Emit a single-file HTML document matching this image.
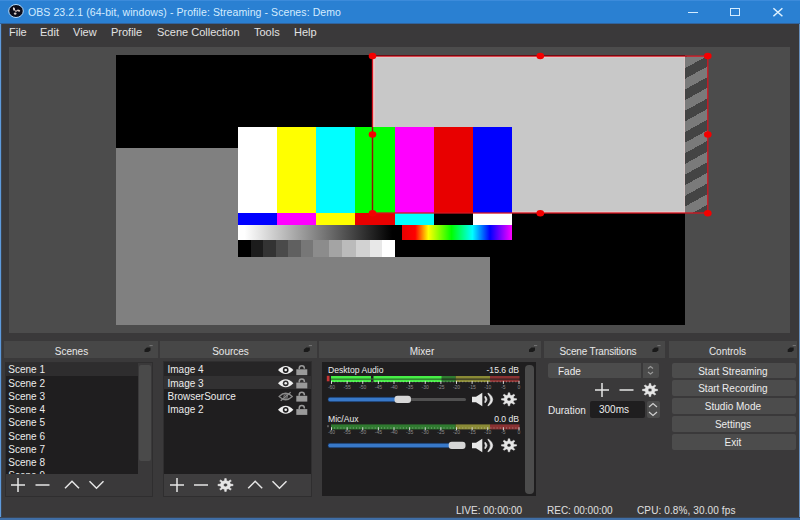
<!DOCTYPE html>
<html>
<head>
<meta charset="utf-8">
<title>OBS</title>
<style>
*{margin:0;padding:0;box-sizing:border-box;}
html,body{width:800px;height:520px;overflow:hidden;background:#3a393a;}
body{font-family:"Liberation Sans",sans-serif;color:#e6e6e6;position:relative;}
.a{position:absolute;}
.t{position:absolute;white-space:nowrap;line-height:1;}
#titlebar{left:0;top:0;width:800px;height:23px;background:#2a80d2;}
#title{left:28px;top:6.5px;font-size:10.5px;color:#d4ecff;letter-spacing:0.085px;}
.menu{top:27px;font-size:11px;color:#e2e2e2;}
#preview{left:9px;top:46.6px;width:781px;height:286px;background:#4c4c4c;}
.docktitle{background:#474747;height:17px;top:341.4px;}
.dt{font-size:10px;color:#e8e8e8;top:347px;text-align:center;}
.list{background:#1f1e1f;}
.row{font-size:10px;color:#ececec;}
.mrow{font-size:8.6px;color:#ececec;}
.btn{left:672.3px;width:123.3px;height:15.7px;background:#4c4c4c;border-radius:2px;font-size:10px;color:#ececec;text-align:center;line-height:16.4px;padding-right:2px;}
.st{font-size:10px;color:#e0e0e0;top:506.4px;}
</style>
</head>
<body>
<!-- title bar -->
<div class="a" id="titlebar" style=""></div>
<div class="a" style="left:0;top:0;width:800px;height:1px;background:#3c8bdb"></div>
<svg class="a" style="left:7.5px;top:3.3px" width="16" height="16" viewBox="0 0 16 16">
  <ellipse cx="8" cy="8" rx="7.3" ry="6.5" fill="#0c0c18" stroke="#b4dcff" stroke-width="1"/>
  <ellipse cx="6" cy="6" rx="1" ry="1.8" fill="#e8dcd8" transform="rotate(-15 6 6)"/>
  <ellipse cx="10.6" cy="7.6" rx="1.7" ry="1" fill="#d8c8c4" transform="rotate(15 10.6 7.6)"/>
  <ellipse cx="7.2" cy="10.6" rx="1.3" ry="1.2" fill="#d8ccc8"/>
  <ellipse cx="8" cy="8" rx="1" ry="0.9" fill="#b8a8a4"/>
</svg>
<div class="t" id="title">OBS 23.2.1 (64-bit, windows) - Profile: Streaming - Scenes: Demo</div>
<div class="a" style="left:688px;top:11.5px;width:10px;height:1.2px;background:#d4ecff"></div>
<div class="a" style="left:730.4px;top:7.6px;width:9.8px;height:8.6px;border:1.1px solid #d4ecff"></div>
<svg class="a" style="left:772px;top:6px" width="12" height="12" viewBox="0 0 12 12"><path d="M1.4 2.2 L10.4 10.2 M10.4 2.2 L1.4 10.2" stroke="#e0f2ff" stroke-width="1.5" fill="none"/></svg>
<!-- menu -->
<div class="t menu" style="left:9px;top:27px;">File</div>
<div class="t menu" style="left:40px;top:27px;">Edit</div>
<div class="t menu" style="left:73px;top:27px;">View</div>
<div class="t menu" style="left:111px;top:27px;">Profile</div>
<div class="t menu" style="left:157px;top:27px;">Scene Collection</div>
<div class="t menu" style="left:254px;top:27px;">Tools</div>
<div class="t menu" style="left:294px;top:27px;">Help</div>
<!-- preview -->
<div class="a" id="preview" style=""></div>
<div class="a" style="left:116px;top:55px;width:569px;height:270px;background:#000"></div>
<div class="a" style="left:116px;top:148px;width:374px;height:177px;background:#808080"></div>
<div class="a" style="left:373px;top:56px;width:312px;height:157px;background:#c8c8c8;box-shadow:inset 1px 1px 0 0.6px #f0cccc, inset 0 -1px 0 0.4px #f0cccc"></div>
<div class="a" style="left:685px;top:56px;width:23px;height:157px;background:repeating-linear-gradient(151deg,#444 -7.9px,#444 1.4px,#7a7a7a 1.4px,#7a7a7a 10.7px)"></div>
<div class="a" style="left:238px;top:127px;width:274px;height:130px;background:#000"></div>
<div class="a" style="left:238px;top:127px;width:274px;height:86px;background:linear-gradient(90deg,#fff 0 14.2857%,#ff0 14.2857% 28.5714%,#0ff 28.5714% 42.857%,#0f0 42.857% 57.143%,#f0f 57.143% 71.43%,#e80000 71.43% 85.714%,#00f 85.714% 100%)"></div>
<div class="a" style="left:238px;top:213px;width:274px;height:12px;background:linear-gradient(90deg,#00f 0 14.2857%,#f0f 14.2857% 28.5714%,#ff0 28.5714% 42.857%,#e80000 42.857% 57.143%,#0ff 57.143% 71.43%,#000 71.43% 85.714%,#fff 85.714% 100%)"></div>
<div class="a" style="left:238px;top:225px;width:164px;height:15px;background:linear-gradient(90deg,#fff 0%,#fff 4%,#000 94%,#000 100%)"></div>
<div class="a" style="left:402px;top:225px;width:110px;height:15px;background:linear-gradient(90deg,#e80000 0%,#f00 12%,#ff0 24%,#0f0 45%,#0ff 64%,#00f 80%,#f0f 100%)"></div>
<div class="a" style="left:238px;top:240px;width:157px;height:17px;background:linear-gradient(90deg,#000 0 8%,#1c1c1c 8% 16%,#333 16% 24%,#4a4a4a 24% 32%,#606060 32% 40%,#777 40% 48%,#8c8c8c 48% 58%,#a4a4a4 58% 66%,#bbb 66% 75%,#d2d2d2 75% 84%,#e8e8e8 84% 92%,#fff 92% 100%)"></div>
<svg class="a" style="left:0;top:0" width="800" height="340">
 <rect x="372.5" y="56.1" width="335.3" height="156.9" fill="none" stroke="#d41420" stroke-width="1.3"/>
 <path d="M372.5 127V213" stroke="#8c1800" stroke-width="1.25" fill="none"/>
 <path d="M372.5 213V214" stroke="#f00" stroke-width="1.25" fill="none"/>
 <g fill="#f40000">
  <ellipse cx="372.5" cy="56" rx="3.8" ry="3.2"/><ellipse cx="540.3" cy="56" rx="3.8" ry="3.2"/><ellipse cx="707.8" cy="56" rx="3.8" ry="3.2"/>
  <ellipse cx="372.5" cy="134.5" rx="3.8" ry="3.2"/><ellipse cx="707.8" cy="134.5" rx="3.8" ry="3.2"/>
  <ellipse cx="372.5" cy="213.2" rx="3.8" ry="3.2"/><ellipse cx="540.3" cy="213.2" rx="3.8" ry="3.2"/><ellipse cx="707.8" cy="213.2" rx="3.8" ry="3.2"/>
 </g>
</svg>
<!-- dock titles -->
<div class="a docktitle" style="left:4px;width:153.5px"></div>
<div class="a docktitle" style="left:160px;width:156.7px"></div>
<div class="a docktitle" style="left:318.6px;width:222.6px"></div>
<div class="a docktitle" style="left:544px;width:121.3px"></div>
<div class="a docktitle" style="left:668.5px;width:128.5px"></div>
<div class="t dt" style="left:4px;top:347px;width:135px;">Scenes</div>
<div class="t dt" style="left:160px;top:347px;width:141px;">Sources</div>
<div class="t dt" style="left:319px;top:347px;width:206px;">Mixer</div>
<div class="t dt" style="left:543px;top:347px;width:110px;letter-spacing:-0.15px;">Scene Transitions</div>
<div class="t dt" style="left:667px;top:347px;width:121px;">Controls</div>
<!-- scenes -->
<div class="a list" style="left:6px;top:362.5px;width:144px;height:111.5px"></div>
<div class="a" style="left:6px;top:362.5px;width:132px;height:13px;background:#2e2d2e"></div>
<div class="a" style="left:138px;top:362.5px;width:13px;height:111.5px;background:#3a393a"></div>
<div class="a" style="left:139px;top:364.6px;width:11.5px;height:96px;background:#4a4a4a;border-radius:2px"></div>
<div class="a" style="left:5px;top:361.5px;width:147.5px;height:135.3px;border:1px solid #2f2e2f"></div>
<div class="a" style="left:0;top:0;width:138px;height:474px;overflow:hidden">
<div class="t row" style="left:8.3px;top:365.2px;">Scene 1</div>
<div class="t row" style="left:8.3px;top:378.5px;">Scene 2</div>
<div class="t row" style="left:8.3px;top:391.7px;">Scene 3</div>
<div class="t row" style="left:8.3px;top:405.0px;">Scene 4</div>
<div class="t row" style="left:8.3px;top:418.3px;">Scene 5</div>
<div class="t row" style="left:8.3px;top:431.5px;">Scene 6</div>
<div class="t row" style="left:8.3px;top:444.8px;">Scene 7</div>
<div class="t row" style="left:8.3px;top:458.1px;">Scene 8</div>
<div class="t row" style="left:8.3px;top:471.4px;">Scene 9</div>
</div>
<!-- sources -->
<div class="a list" style="left:164px;top:362px;width:147px;height:112px"></div>
<div class="a" style="left:164px;top:362px;width:147px;height:13.7px;background:#262526"></div>
<div class="a" style="left:164px;top:375.7px;width:147px;height:13.6px;background:#323132"></div>
<div class="a" style="left:164px;top:474px;width:147px;height:22px;background:#3e3d3e"></div>
<div class="a" style="left:163px;top:361.3px;width:149px;height:135.5px;border:1px solid #2f2e2f"></div>
<div class="t row" style="left:167.5px;top:365.3px;">Image 4</div>
<div class="t row" style="left:167.5px;top:378.6px;">Image 3</div>
<div class="t row" style="left:167.5px;top:391.8px;">BrowserSource</div>
<div class="t row" style="left:167.5px;top:405.1px;">Image 2</div>
<!-- mixer -->
<div class="a list" style="left:322px;top:362px;width:214px;height:134px"></div>
<div class="a" style="left:525.3px;top:364.7px;width:8.7px;height:129px;background:#4c4c4c;border-radius:4px"></div>
<div class="t mrow" style="left:328px;top:366px;">Desktop Audio</div>
<div class="t mrow" style="left:440px;top:366px;width:79px;text-align:right;">-15.6 dB</div>
<div class="t mrow" style="left:328px;top:414.5px;">Mic/Aux</div>
<div class="t mrow" style="left:440px;top:414.5px;width:79px;text-align:right;">0.0 dB</div>
<!-- transitions -->
<div class="a" style="left:548px;top:362.7px;width:93.4px;height:15.5px;background:#4c4c4c;border-radius:2px 0 0 2px"></div>
<div class="a" style="left:642.6px;top:362.7px;width:16.6px;height:15.5px;background:#4c4c4c;border-radius:0 2px 2px 0"></div>
<div class="t row" style="left:558px;top:367.2px;">Fade</div>
<div class="t row" style="left:548px;top:406px;">Duration</div>
<div class="a" style="left:590px;top:401px;width:55px;height:17px;background:#1f1e1f;border-radius:2px"></div>
<div class="t row" style="left:599px;top:405px;">300ms</div>
<div class="a" style="left:647px;top:401px;width:13px;height:17px;background:#4c4c4c;border-radius:2px"></div>
<svg class="a" style="left:0;top:340px" width="800" height="180" viewBox="0 340 800 180">
<rect x="331" y="376" width="124.69999999999999" height="2.6" fill="#2f7a2f" /><rect x="455.7" y="376" width="34.30000000000001" height="2.6" fill="#8a8a35" /><rect x="490" y="376" width="29.5" height="2.6" fill="#8a3232" /><rect x="331" y="376" width="110.5" height="2.6" fill="#46ee46" /><rect x="371" y="376" width="2.5" height="2.6" fill="#1f1e1f" /><rect x="331" y="379.6" width="124.69999999999999" height="2.4" fill="#2f7a2f" /><rect x="455.7" y="379.6" width="34.30000000000001" height="2.4" fill="#8a8a35" /><rect x="490" y="379.6" width="29.5" height="2.4" fill="#8a3232" /><rect x="331" y="379.6" width="110.5" height="2.4" fill="#46ee46" /><rect x="371" y="379.6" width="2.5" height="2.4" fill="#1f1e1f" />
<rect x="326.8" y="375.8" width="2.7" height="5.5" fill="#c43434" />
<rect x="331.0" y="380.9" width="1" height="3" fill="#d8d8d8" /><rect x="334.12" y="380.9" width="1" height="1.6" fill="#d2d2d2" opacity="0.35"/><rect x="337.25" y="380.9" width="1" height="1.6" fill="#d2d2d2" opacity="0.35"/><rect x="340.38" y="380.9" width="1" height="1.6" fill="#d2d2d2" opacity="0.35"/><rect x="343.5" y="380.9" width="1" height="1.6" fill="#d2d2d2" opacity="0.35"/><rect x="346.62" y="380.9" width="1" height="3" fill="#d8d8d8" /><rect x="349.75" y="380.9" width="1" height="1.6" fill="#d2d2d2" opacity="0.35"/><rect x="352.88" y="380.9" width="1" height="1.6" fill="#d2d2d2" opacity="0.35"/><rect x="356.0" y="380.9" width="1" height="1.6" fill="#d2d2d2" opacity="0.35"/><rect x="359.12" y="380.9" width="1" height="1.6" fill="#d2d2d2" opacity="0.35"/><rect x="362.25" y="380.9" width="1" height="3" fill="#d8d8d8" /><rect x="365.38" y="380.9" width="1" height="1.6" fill="#d2d2d2" opacity="0.35"/><rect x="368.5" y="380.9" width="1" height="1.6" fill="#d2d2d2" opacity="0.35"/><rect x="371.62" y="380.9" width="1" height="1.6" fill="#d2d2d2" opacity="0.35"/><rect x="374.75" y="380.9" width="1" height="1.6" fill="#d2d2d2" opacity="0.35"/><rect x="377.88" y="380.9" width="1" height="3" fill="#d8d8d8" /><rect x="381.0" y="380.9" width="1" height="1.6" fill="#d2d2d2" opacity="0.35"/><rect x="384.12" y="380.9" width="1" height="1.6" fill="#d2d2d2" opacity="0.35"/><rect x="387.25" y="380.9" width="1" height="1.6" fill="#d2d2d2" opacity="0.35"/><rect x="390.38" y="380.9" width="1" height="1.6" fill="#d2d2d2" opacity="0.35"/><rect x="393.5" y="380.9" width="1" height="3" fill="#d8d8d8" /><rect x="396.62" y="380.9" width="1" height="1.6" fill="#d2d2d2" opacity="0.35"/><rect x="399.75" y="380.9" width="1" height="1.6" fill="#d2d2d2" opacity="0.35"/><rect x="402.88" y="380.9" width="1" height="1.6" fill="#d2d2d2" opacity="0.35"/><rect x="406.0" y="380.9" width="1" height="1.6" fill="#d2d2d2" opacity="0.35"/><rect x="409.12" y="380.9" width="1" height="3" fill="#d8d8d8" /><rect x="412.25" y="380.9" width="1" height="1.6" fill="#d2d2d2" opacity="0.35"/><rect x="415.38" y="380.9" width="1" height="1.6" fill="#d2d2d2" opacity="0.35"/><rect x="418.5" y="380.9" width="1" height="1.6" fill="#d2d2d2" opacity="0.35"/><rect x="421.62" y="380.9" width="1" height="1.6" fill="#d2d2d2" opacity="0.35"/><rect x="424.75" y="380.9" width="1" height="3" fill="#d8d8d8" /><rect x="427.88" y="380.9" width="1" height="1.6" fill="#d2d2d2" opacity="0.35"/><rect x="431.0" y="380.9" width="1" height="1.6" fill="#d2d2d2" opacity="0.35"/><rect x="434.12" y="380.9" width="1" height="1.6" fill="#d2d2d2" opacity="0.35"/><rect x="437.25" y="380.9" width="1" height="1.6" fill="#d2d2d2" opacity="0.35"/><rect x="440.38" y="380.9" width="1" height="3" fill="#d8d8d8" /><rect x="443.5" y="380.9" width="1" height="1.6" fill="#d2d2d2" opacity="0.35"/><rect x="446.62" y="380.9" width="1" height="1.6" fill="#d2d2d2" opacity="0.35"/><rect x="449.75" y="380.9" width="1" height="1.6" fill="#d2d2d2" opacity="0.35"/><rect x="452.88" y="380.9" width="1" height="1.6" fill="#d2d2d2" opacity="0.35"/><rect x="456.0" y="380.9" width="1" height="3" fill="#d8d8d8" /><rect x="459.12" y="380.9" width="1" height="1.6" fill="#d2d2d2" opacity="0.35"/><rect x="462.25" y="380.9" width="1" height="1.6" fill="#d2d2d2" opacity="0.35"/><rect x="465.38" y="380.9" width="1" height="1.6" fill="#d2d2d2" opacity="0.35"/><rect x="468.5" y="380.9" width="1" height="1.6" fill="#d2d2d2" opacity="0.35"/><rect x="471.62" y="380.9" width="1" height="3" fill="#d8d8d8" /><rect x="474.75" y="380.9" width="1" height="1.6" fill="#d2d2d2" opacity="0.35"/><rect x="477.88" y="380.9" width="1" height="1.6" fill="#d2d2d2" opacity="0.35"/><rect x="481.0" y="380.9" width="1" height="1.6" fill="#d2d2d2" opacity="0.35"/><rect x="484.12" y="380.9" width="1" height="1.6" fill="#d2d2d2" opacity="0.35"/><rect x="487.25" y="380.9" width="1" height="3" fill="#d8d8d8" /><rect x="490.38" y="380.9" width="1" height="1.6" fill="#d2d2d2" opacity="0.35"/><rect x="493.5" y="380.9" width="1" height="1.6" fill="#d2d2d2" opacity="0.35"/><rect x="496.62" y="380.9" width="1" height="1.6" fill="#d2d2d2" opacity="0.35"/><rect x="499.75" y="380.9" width="1" height="1.6" fill="#d2d2d2" opacity="0.35"/><rect x="502.88" y="380.9" width="1" height="3" fill="#d8d8d8" /><rect x="506.0" y="380.9" width="1" height="1.6" fill="#d2d2d2" opacity="0.35"/><rect x="509.12" y="380.9" width="1" height="1.6" fill="#d2d2d2" opacity="0.35"/><rect x="512.25" y="380.9" width="1" height="1.6" fill="#d2d2d2" opacity="0.35"/><rect x="515.38" y="380.9" width="1" height="1.6" fill="#d2d2d2" opacity="0.35"/><rect x="518.5" y="380.9" width="1" height="3" fill="#d8d8d8" /><text x="331.5" y="388.5" text-anchor="middle" font-size="5" fill="#8c8c8c" font-family="Liberation Sans, sans-serif">-60</text><text x="347.1" y="388.5" text-anchor="middle" font-size="5" fill="#8c8c8c" font-family="Liberation Sans, sans-serif">-55</text><text x="362.8" y="388.5" text-anchor="middle" font-size="5" fill="#8c8c8c" font-family="Liberation Sans, sans-serif">-50</text><text x="378.4" y="388.5" text-anchor="middle" font-size="5" fill="#8c8c8c" font-family="Liberation Sans, sans-serif">-45</text><text x="394.0" y="388.5" text-anchor="middle" font-size="5" fill="#8c8c8c" font-family="Liberation Sans, sans-serif">-40</text><text x="409.6" y="388.5" text-anchor="middle" font-size="5" fill="#8c8c8c" font-family="Liberation Sans, sans-serif">-35</text><text x="425.2" y="388.5" text-anchor="middle" font-size="5" fill="#8c8c8c" font-family="Liberation Sans, sans-serif">-30</text><text x="440.9" y="388.5" text-anchor="middle" font-size="5" fill="#8c8c8c" font-family="Liberation Sans, sans-serif">-25</text><text x="456.5" y="388.5" text-anchor="middle" font-size="5" fill="#8c8c8c" font-family="Liberation Sans, sans-serif">-20</text><text x="472.1" y="388.5" text-anchor="middle" font-size="5" fill="#8c8c8c" font-family="Liberation Sans, sans-serif">-15</text><text x="487.8" y="388.5" text-anchor="middle" font-size="5" fill="#8c8c8c" font-family="Liberation Sans, sans-serif">-10</text><text x="503.4" y="388.5" text-anchor="middle" font-size="5" fill="#8c8c8c" font-family="Liberation Sans, sans-serif">-5</text><text x="519.0" y="388.5" text-anchor="middle" font-size="5" fill="#8c8c8c" font-family="Liberation Sans, sans-serif">0</text>
<rect x="331" y="424.4" width="124.69999999999999" height="5" fill="#2f7a2f" /><rect x="455.7" y="424.4" width="34.30000000000001" height="5" fill="#8a8a35" /><rect x="490" y="424.4" width="29.5" height="5" fill="#8a3232" />
<rect x="331.0" y="427.2" width="1" height="3" fill="#d8d8d8" /><rect x="334.12" y="427.2" width="1" height="1.6" fill="#d2d2d2" opacity="0.35"/><rect x="337.25" y="427.2" width="1" height="1.6" fill="#d2d2d2" opacity="0.35"/><rect x="340.38" y="427.2" width="1" height="1.6" fill="#d2d2d2" opacity="0.35"/><rect x="343.5" y="427.2" width="1" height="1.6" fill="#d2d2d2" opacity="0.35"/><rect x="346.62" y="427.2" width="1" height="3" fill="#d8d8d8" /><rect x="349.75" y="427.2" width="1" height="1.6" fill="#d2d2d2" opacity="0.35"/><rect x="352.88" y="427.2" width="1" height="1.6" fill="#d2d2d2" opacity="0.35"/><rect x="356.0" y="427.2" width="1" height="1.6" fill="#d2d2d2" opacity="0.35"/><rect x="359.12" y="427.2" width="1" height="1.6" fill="#d2d2d2" opacity="0.35"/><rect x="362.25" y="427.2" width="1" height="3" fill="#d8d8d8" /><rect x="365.38" y="427.2" width="1" height="1.6" fill="#d2d2d2" opacity="0.35"/><rect x="368.5" y="427.2" width="1" height="1.6" fill="#d2d2d2" opacity="0.35"/><rect x="371.62" y="427.2" width="1" height="1.6" fill="#d2d2d2" opacity="0.35"/><rect x="374.75" y="427.2" width="1" height="1.6" fill="#d2d2d2" opacity="0.35"/><rect x="377.88" y="427.2" width="1" height="3" fill="#d8d8d8" /><rect x="381.0" y="427.2" width="1" height="1.6" fill="#d2d2d2" opacity="0.35"/><rect x="384.12" y="427.2" width="1" height="1.6" fill="#d2d2d2" opacity="0.35"/><rect x="387.25" y="427.2" width="1" height="1.6" fill="#d2d2d2" opacity="0.35"/><rect x="390.38" y="427.2" width="1" height="1.6" fill="#d2d2d2" opacity="0.35"/><rect x="393.5" y="427.2" width="1" height="3" fill="#d8d8d8" /><rect x="396.62" y="427.2" width="1" height="1.6" fill="#d2d2d2" opacity="0.35"/><rect x="399.75" y="427.2" width="1" height="1.6" fill="#d2d2d2" opacity="0.35"/><rect x="402.88" y="427.2" width="1" height="1.6" fill="#d2d2d2" opacity="0.35"/><rect x="406.0" y="427.2" width="1" height="1.6" fill="#d2d2d2" opacity="0.35"/><rect x="409.12" y="427.2" width="1" height="3" fill="#d8d8d8" /><rect x="412.25" y="427.2" width="1" height="1.6" fill="#d2d2d2" opacity="0.35"/><rect x="415.38" y="427.2" width="1" height="1.6" fill="#d2d2d2" opacity="0.35"/><rect x="418.5" y="427.2" width="1" height="1.6" fill="#d2d2d2" opacity="0.35"/><rect x="421.62" y="427.2" width="1" height="1.6" fill="#d2d2d2" opacity="0.35"/><rect x="424.75" y="427.2" width="1" height="3" fill="#d8d8d8" /><rect x="427.88" y="427.2" width="1" height="1.6" fill="#d2d2d2" opacity="0.35"/><rect x="431.0" y="427.2" width="1" height="1.6" fill="#d2d2d2" opacity="0.35"/><rect x="434.12" y="427.2" width="1" height="1.6" fill="#d2d2d2" opacity="0.35"/><rect x="437.25" y="427.2" width="1" height="1.6" fill="#d2d2d2" opacity="0.35"/><rect x="440.38" y="427.2" width="1" height="3" fill="#d8d8d8" /><rect x="443.5" y="427.2" width="1" height="1.6" fill="#d2d2d2" opacity="0.35"/><rect x="446.62" y="427.2" width="1" height="1.6" fill="#d2d2d2" opacity="0.35"/><rect x="449.75" y="427.2" width="1" height="1.6" fill="#d2d2d2" opacity="0.35"/><rect x="452.88" y="427.2" width="1" height="1.6" fill="#d2d2d2" opacity="0.35"/><rect x="456.0" y="427.2" width="1" height="3" fill="#d8d8d8" /><rect x="459.12" y="427.2" width="1" height="1.6" fill="#d2d2d2" opacity="0.35"/><rect x="462.25" y="427.2" width="1" height="1.6" fill="#d2d2d2" opacity="0.35"/><rect x="465.38" y="427.2" width="1" height="1.6" fill="#d2d2d2" opacity="0.35"/><rect x="468.5" y="427.2" width="1" height="1.6" fill="#d2d2d2" opacity="0.35"/><rect x="471.62" y="427.2" width="1" height="3" fill="#d8d8d8" /><rect x="474.75" y="427.2" width="1" height="1.6" fill="#d2d2d2" opacity="0.35"/><rect x="477.88" y="427.2" width="1" height="1.6" fill="#d2d2d2" opacity="0.35"/><rect x="481.0" y="427.2" width="1" height="1.6" fill="#d2d2d2" opacity="0.35"/><rect x="484.12" y="427.2" width="1" height="1.6" fill="#d2d2d2" opacity="0.35"/><rect x="487.25" y="427.2" width="1" height="3" fill="#d8d8d8" /><rect x="490.38" y="427.2" width="1" height="1.6" fill="#d2d2d2" opacity="0.35"/><rect x="493.5" y="427.2" width="1" height="1.6" fill="#d2d2d2" opacity="0.35"/><rect x="496.62" y="427.2" width="1" height="1.6" fill="#d2d2d2" opacity="0.35"/><rect x="499.75" y="427.2" width="1" height="1.6" fill="#d2d2d2" opacity="0.35"/><rect x="502.88" y="427.2" width="1" height="3" fill="#d8d8d8" /><rect x="506.0" y="427.2" width="1" height="1.6" fill="#d2d2d2" opacity="0.35"/><rect x="509.12" y="427.2" width="1" height="1.6" fill="#d2d2d2" opacity="0.35"/><rect x="512.25" y="427.2" width="1" height="1.6" fill="#d2d2d2" opacity="0.35"/><rect x="515.38" y="427.2" width="1" height="1.6" fill="#d2d2d2" opacity="0.35"/><rect x="518.5" y="427.2" width="1" height="3" fill="#d8d8d8" /><text x="331.5" y="434.4" text-anchor="middle" font-size="5" fill="#8c8c8c" font-family="Liberation Sans, sans-serif">-60</text><text x="347.1" y="434.4" text-anchor="middle" font-size="5" fill="#8c8c8c" font-family="Liberation Sans, sans-serif">-55</text><text x="362.8" y="434.4" text-anchor="middle" font-size="5" fill="#8c8c8c" font-family="Liberation Sans, sans-serif">-50</text><text x="378.4" y="434.4" text-anchor="middle" font-size="5" fill="#8c8c8c" font-family="Liberation Sans, sans-serif">-45</text><text x="394.0" y="434.4" text-anchor="middle" font-size="5" fill="#8c8c8c" font-family="Liberation Sans, sans-serif">-40</text><text x="409.6" y="434.4" text-anchor="middle" font-size="5" fill="#8c8c8c" font-family="Liberation Sans, sans-serif">-35</text><text x="425.2" y="434.4" text-anchor="middle" font-size="5" fill="#8c8c8c" font-family="Liberation Sans, sans-serif">-30</text><text x="440.9" y="434.4" text-anchor="middle" font-size="5" fill="#8c8c8c" font-family="Liberation Sans, sans-serif">-25</text><text x="456.5" y="434.4" text-anchor="middle" font-size="5" fill="#8c8c8c" font-family="Liberation Sans, sans-serif">-20</text><text x="472.1" y="434.4" text-anchor="middle" font-size="5" fill="#8c8c8c" font-family="Liberation Sans, sans-serif">-15</text><text x="487.8" y="434.4" text-anchor="middle" font-size="5" fill="#8c8c8c" font-family="Liberation Sans, sans-serif">-10</text><text x="503.4" y="434.4" text-anchor="middle" font-size="5" fill="#8c8c8c" font-family="Liberation Sans, sans-serif">-5</text><text x="519.0" y="434.4" text-anchor="middle" font-size="5" fill="#8c8c8c" font-family="Liberation Sans, sans-serif">0</text>
<rect x="327" y="425.2" width="2" height="2" fill="#5a5a5a" />
<rect x="328" y="398" width="138" height="3" fill="#505050" rx="1.5"/><rect x="328" y="397.3" width="70" height="4.4" fill="#3878c8" rx="2" stroke="#14305c" stroke-width="0.6"/><rect x="394.5" y="395.7" width="16.5" height="7.3" fill="#d6d6d6" rx="3"/>
<rect x="328" y="443.3" width="125" height="4.4" fill="#3878c8" rx="2" stroke="#14305c" stroke-width="0.6"/><rect x="448.7" y="441.7" width="16.8" height="7.3" fill="#d6d6d6" rx="3"/>
<g fill="none" stroke="#e6e6e6" stroke-width="1.5">
<path d="M11 485H25M18 478V492"/><path d="M35.5 485H49.5"/><path d="M65 488.2L72 481.2L79 488.2"/><path d="M89.5 481.2L96.5 488.2L103.5 481.2"/>
<path d="M170 485H184M177 478V492"/><path d="M194 485H208"/><path d="M248.2 488.2L255.2 481.2L262.2 488.2"/><path d="M272.5 481.2L279.5 488.2L286.5 481.2"/>
<path d="M595 390H609M602 383V397"/><path d="M619.5 390H633.5"/>
</g>
<path d="M226.57 489.29 L226.27 491.50 L224.73 491.50 L224.43 489.29 L222.73 488.68 L220.70 490.07 L219.61 489.13 L221.22 487.38 L220.51 485.92 L217.94 485.67 L217.94 484.33 L220.51 484.08 L221.22 482.62 L219.61 480.87 L220.70 479.93 L222.73 481.32 L224.43 480.71 L224.73 478.50 L226.27 478.50 L226.57 480.71 L228.27 481.32 L230.30 479.93 L231.39 480.87 L229.78 482.62 L230.49 484.08 L233.06 484.33 L233.06 485.67 L230.49 485.92 L229.78 487.38 L231.39 489.13 L230.30 490.07 L228.27 488.68Z M227.50 485.00 A2.0 1.8 0 1 0 223.50 485.00 A2.0 1.8 0 1 0 227.50 485.00Z" fill="#e6e6e6" fill-rule="evenodd" stroke="#e6e6e6" stroke-width="0.5" stroke-linejoin="round"/><path d="M651.07 394.29 L650.77 396.50 L649.23 396.50 L648.93 394.29 L647.23 393.68 L645.20 395.07 L644.11 394.13 L645.72 392.38 L645.01 390.92 L642.44 390.67 L642.44 389.33 L645.01 389.08 L645.72 387.62 L644.11 385.87 L645.20 384.93 L647.23 386.32 L648.93 385.71 L649.23 383.50 L650.77 383.50 L651.07 385.71 L652.77 386.32 L654.80 384.93 L655.89 385.87 L654.28 387.62 L654.99 389.08 L657.56 389.33 L657.56 390.67 L654.99 390.92 L654.28 392.38 L655.89 394.13 L654.80 395.07 L652.77 393.68Z M652.00 390.00 A2.0 1.8 0 1 0 648.00 390.00 A2.0 1.8 0 1 0 652.00 390.00Z" fill="#e6e6e6" fill-rule="evenodd" stroke="#e6e6e6" stroke-width="0.5" stroke-linejoin="round"/><path d="M510.07 403.59 L509.77 405.80 L508.23 405.80 L507.93 403.59 L506.23 402.98 L504.20 404.37 L503.11 403.43 L504.72 401.68 L504.01 400.22 L501.44 399.97 L501.44 398.63 L504.01 398.38 L504.72 396.92 L503.11 395.17 L504.20 394.23 L506.23 395.62 L507.93 395.01 L508.23 392.80 L509.77 392.80 L510.07 395.01 L511.77 395.62 L513.80 394.23 L514.89 395.17 L513.28 396.92 L513.99 398.38 L516.56 398.63 L516.56 399.97 L513.99 400.22 L513.28 401.68 L514.89 403.43 L513.80 404.37 L511.77 402.98Z M511.00 399.30 A2.0 1.8 0 1 0 507.00 399.30 A2.0 1.8 0 1 0 511.00 399.30Z" fill="#e6e6e6" fill-rule="evenodd" stroke="#e6e6e6" stroke-width="0.5" stroke-linejoin="round"/><path d="M510.07 449.59 L509.77 451.80 L508.23 451.80 L507.93 449.59 L506.23 448.98 L504.20 450.37 L503.11 449.43 L504.72 447.68 L504.01 446.22 L501.44 445.97 L501.44 444.63 L504.01 444.38 L504.72 442.92 L503.11 441.17 L504.20 440.23 L506.23 441.62 L507.93 441.01 L508.23 438.80 L509.77 438.80 L510.07 441.01 L511.77 441.62 L513.80 440.23 L514.89 441.17 L513.28 442.92 L513.99 444.38 L516.56 444.63 L516.56 445.97 L513.99 446.22 L513.28 447.68 L514.89 449.43 L513.80 450.37 L511.77 448.98Z M511.00 445.30 A2.0 1.8 0 1 0 507.00 445.30 A2.0 1.8 0 1 0 511.00 445.30Z" fill="#e6e6e6" fill-rule="evenodd" stroke="#e6e6e6" stroke-width="0.5" stroke-linejoin="round"/>
<path d="M472 396.8H476L482.3 392.7V406.3L476 402.2H472Z" fill="#e6e6e6"/><path d="M485.1 396.1Q488.9 399.5 485.1 402.9L484.7 402.1Q486.1 399.5 484.7 396.9Z" fill="#e6e6e6" stroke="#e6e6e6" stroke-width="0.6"/><path d="M488.3 392.9Q497.1 399.5 488.3 406.1L487.9 405.3Q492.9 399.5 487.9 393.7Z" fill="#e6e6e6" stroke="#e6e6e6" stroke-width="0.6"/><path d="M472 442.8H476L482.3 438.7V452.3L476 448.2H472Z" fill="#e6e6e6"/><path d="M485.1 442.1Q488.9 445.5 485.1 448.9L484.7 448.1Q486.1 445.5 484.7 442.9Z" fill="#e6e6e6" stroke="#e6e6e6" stroke-width="0.6"/><path d="M488.3 438.9Q497.1 445.5 488.3 452.1L487.9 451.3Q492.9 445.5 487.9 439.7Z" fill="#e6e6e6" stroke="#e6e6e6" stroke-width="0.6"/>
<path d="M278.0 370.0Q285.7 362.0 293.4 370.0Q285.7 378.0 278.0 370.0Z" fill="#f0f0f0"/><circle cx="285.7" cy="370.0" r="2.9" fill="#1f1e1f"/><circle cx="285.7" cy="370.0" r="1.3" fill="#f0f0f0"/><rect x="296.3" y="369.3" width="11" height="5.8" fill="#9a9a9a"/><path d="M299.2 369.3V368.4A2.6 2.6 0 0 1 304.40000000000003 368.4V368.8" fill="none" stroke="#9a9a9a" stroke-width="1.5"/>
<path d="M278.0 383.3Q285.7 375.3 293.4 383.3Q285.7 391.3 278.0 383.3Z" fill="#f0f0f0"/><circle cx="285.7" cy="383.3" r="2.9" fill="#323132"/><circle cx="285.7" cy="383.3" r="1.3" fill="#f0f0f0"/><rect x="296.3" y="382.6" width="11" height="5.8" fill="#9a9a9a"/><path d="M299.2 382.6V381.7A2.6 2.6 0 0 1 304.40000000000003 381.7V382.1" fill="none" stroke="#9a9a9a" stroke-width="1.5"/>
<path d="M279.09999999999997 396.5Q285.7 390.0 292.3 396.5Q285.7 403.0 279.09999999999997 396.5Z" fill="none" stroke="#8a8a8a" stroke-width="1.2"/><circle cx="285.7" cy="396.5" r="1.8" fill="none" stroke="#8a8a8a" stroke-width="1"/><path d="M280.7 400.7L290.7 392.3" stroke="#8a8a8a" stroke-width="1.3" fill="none"/><rect x="296.3" y="395.8" width="11" height="5.8" fill="#9a9a9a"/><path d="M299.2 395.8V394.9A2.6 2.6 0 0 1 304.40000000000003 394.9V395.3" fill="none" stroke="#9a9a9a" stroke-width="1.5"/>
<path d="M278.0 409.8Q285.7 401.8 293.4 409.8Q285.7 417.8 278.0 409.8Z" fill="#f0f0f0"/><circle cx="285.7" cy="409.8" r="2.9" fill="#1f1e1f"/><circle cx="285.7" cy="409.8" r="1.3" fill="#f0f0f0"/><rect x="296.3" y="409.1" width="11" height="5.8" fill="#9a9a9a"/><path d="M299.2 409.1V408.2A2.6 2.6 0 0 1 304.40000000000003 408.2V408.6" fill="none" stroke="#9a9a9a" stroke-width="1.5"/>
<path d="M144.5 352.1V349.5L146.89999999999998 347.6H150.5V350.40000000000003L148.29999999999998 352.1Z" fill="#1a1a1a"/><path d="M149.5 345.6H152.7" stroke="#7c7c7c" stroke-width="0.9" fill="none"/><path d="M303.8 352.1V349.5L306.2 347.6H309.8V350.40000000000003L307.6 352.1Z" fill="#1a1a1a"/><path d="M308.8 345.6H312" stroke="#7c7c7c" stroke-width="0.9" fill="none"/><path d="M529.0 352.1V349.5L531.4000000000001 347.6H535.0V350.40000000000003L532.8000000000001 352.1Z" fill="#1a1a1a"/><path d="M534.0 345.6H537.2" stroke="#7c7c7c" stroke-width="0.9" fill="none"/><path d="M652.4 352.1V349.5L654.8000000000001 347.6H658.4V350.40000000000003L656.2 352.1Z" fill="#1a1a1a"/><path d="M657.4 345.6H660.6" stroke="#7c7c7c" stroke-width="0.9" fill="none"/><path d="M787.6999999999999 352.1V349.5L790.1 347.6H793.6999999999999V350.40000000000003L791.5 352.1Z" fill="#1a1a1a"/><path d="M792.6999999999999 345.6H795.9" stroke="#7c7c7c" stroke-width="0.9" fill="none"/>
<path d="M648 368.5L650.5 366.5L653 368.5M648 372L650.5 374L653 372" fill="none" stroke="#9a9a9a" stroke-width="1.1"/>
<path d="M649 407L653 403.5L657 407M649 412L653 415.5L657 412" fill="none" stroke="#d0d0d0" stroke-width="1.2"/>
</svg>
<!-- controls -->
<div class="a btn" style="top:362.60px"></div>
<div class="t row" style="left:672.3px;top:366.6px;width:121.3px;text-align:center;">Start Streaming</div>
<div class="a btn" style="top:380.45px"></div>
<div class="t row" style="left:672.3px;top:384.4px;width:121.3px;text-align:center;">Start Recording</div>
<div class="a btn" style="top:398.30px"></div>
<div class="t row" style="left:672.3px;top:402.1px;width:121.3px;text-align:center;">Studio Mode</div>
<div class="a btn" style="top:416.15px"></div>
<div class="t row" style="left:672.3px;top:419.9px;width:121.3px;text-align:center;">Settings</div>
<div class="a btn" style="top:434.00px"></div>
<div class="t row" style="left:672.3px;top:437.6px;width:121.3px;text-align:center;">Exit</div>
<!-- status -->
<div class="t st" style="left:456px;top:506.4px;">LIVE: 00:00:00</div>
<div class="t st" style="left:547px;top:506.4px;">REC: 00:00:00</div>
<div class="t st" style="left:637px;top:506.4px;letter-spacing:0.12px;">CPU: 0.8%, 30.00 fps</div>
<div class="a" style="left:0;top:24px;width:1px;height:496px;background:#5e9adc"></div>
<div class="a" style="left:1px;top:24px;width:1px;height:496px;background:#3b4654"></div>
<div class="a" style="left:0;top:23px;width:800px;height:1px;background:#30639c"></div>
<div class="a" style="left:799px;top:24px;width:1px;height:496px;background:#6890bc"></div>
<div class="a" style="left:0;top:517px;width:800px;height:1px;background:#3b4656"></div>
<div class="a" style="left:0;top:518px;width:800px;height:2px;background:#3f6ea6"></div>
</body>
</html>
